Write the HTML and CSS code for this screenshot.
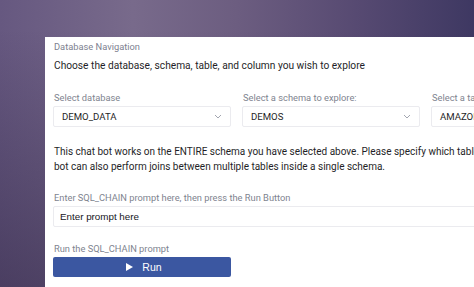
FILE: index.html
```html
<!DOCTYPE html>
<html lang="en">
<head>
    <meta charset="UTF-8">
    <meta name="viewport" content="width=device-width, initial-scale=1.0">
    <title>Database Navigation</title>
    <link rel="stylesheet" href="styles.css">
</head>
<body>
    <div class="panel">
        <div class="panel-caption">Database Navigation</div>
        <div class="panel-lead">Choose the database, schema, table, and column you wish to explore</div>

        <div class="select-row">
            <div class="field">
                <label class="field-label">Select database</label>
                <div class="select-box">
                    <span>DEMO_DATA</span>
                    <svg class="chevron" width="8" height="5" viewBox="0 0 8 5"><path d="M1 1l3 3 3-3" fill="none" stroke="#a3a6b0" stroke-width="1"/></svg>
                </div>
            </div>
            <div class="field">
                <label class="field-label">Select a schema to explore:</label>
                <div class="select-box">
                    <span>DEMOS</span>
                    <svg class="chevron" width="8" height="5" viewBox="0 0 8 5"><path d="M1 1l3 3 3-3" fill="none" stroke="#a3a6b0" stroke-width="1"/></svg>
                </div>
            </div>
            <div class="field">
                <label class="field-label">Select a table to explore:</label>
                <div class="select-box">
                    <span>AMAZON_REVIEWS</span>
                    <svg class="chevron" width="8" height="5" viewBox="0 0 8 5"><path d="M1 1l3 3 3-3" fill="none" stroke="#a3a6b0" stroke-width="1"/></svg>
                </div>
            </div>
        </div>

        <p class="note">This chat bot works on the ENTIRE schema you have selected above. Please specify which table(s) you want to ask about. The chat<br>bot can also perform joins between multiple tables inside a single schema.</p>

        <div class="field">
            <label class="field-label">Enter SQL_CHAIN prompt here, then press the Run Button</label>
            <input class="prompt-input" type="text" value="Enter prompt here">
        </div>

        <div class="field run-field">
            <label class="field-label">Run the SQL_CHAIN prompt</label>
            <button class="run-button">
                <svg width="7" height="8" viewBox="0 0 7 8"><path d="M0 0l7 4-7 4z" fill="#fff"/></svg>
                <span>Run</span>
            </button>
        </div>
    </div>
</body>
</html>
```

FILE: styles.css
```css
html, body {
    height: 100%;
}

body {
    margin: 0;
    overflow: hidden;
    font-family: Roboto, "Liberation Sans", sans-serif;
    background:
        linear-gradient(to bottom, rgba(40, 30, 70, 0) 10%, rgba(40, 30, 60, 0.45) 100%),
        linear-gradient(to right, #665880 0%, #786a8b 28%, #6c5d80 50%, #574a72 75%, #3e3862 100%);
}

.panel {
    margin: 37px 0 0 45px;
    width: 600px;
    height: 260px;
    background: #fff;
    padding: 3px 8px 0 8px;
    box-sizing: border-box;
}

.panel-caption {
    font-size: 9.3px;
    color: #7d8190;
    line-height: 14px;
    padding-left: 1px;
}

.panel-lead {
    font-size: 10.2px;
    color: #1f1f28;
    line-height: 15px;
    margin-top: 4px;
    padding-left: 1px;
}

.select-row {
    display: grid;
    grid-template-columns: 178px 178px 178px;
    gap: 11px;
    margin-top: 18px;
}

.field {
    display: flex;
    flex-direction: column;
}

.field-label {
    font-size: 9.3px;
    color: #80848f;
    line-height: 14px;
    padding-left: 1px;
    margin-bottom: 1px;
}

.select-box {
    height: 21px;
    border: 1px solid #ebebef;
    border-radius: 2px;
    box-sizing: border-box;
    display: flex;
    align-items: center;
    justify-content: space-between;
    padding: 0 8px;
    font-size: 9.6px;
    color: #1f1f28;
}

.note {
    font-size: 10px;
    line-height: 15px;
    color: #1f1f28;
    margin: 17px 0 17px 1px;
    white-space: nowrap;
}

.prompt-input {
    height: 21px;
    border: 1px solid #ebebef;
    border-radius: 2px;
    box-sizing: border-box;
    padding: 0 6px;
    font-family: "Liberation Sans", Arial, sans-serif;
    font-size: 9.8px;
    color: #16161c;
    width: 100%;
    outline: none;
}

.run-field {
    margin-top: 15px;
}

.run-button {
    width: 178px;
    height: 20px;
    border: none;
    border-radius: 2px;
    background: #3b57a1;
    color: #fff;
    font-family: "Liberation Sans", Arial, sans-serif;
    font-size: 10.5px;
    display: flex;
    align-items: center;
    justify-content: center;
    gap: 9px;
    padding: 0 0 0 4px;
}
```
